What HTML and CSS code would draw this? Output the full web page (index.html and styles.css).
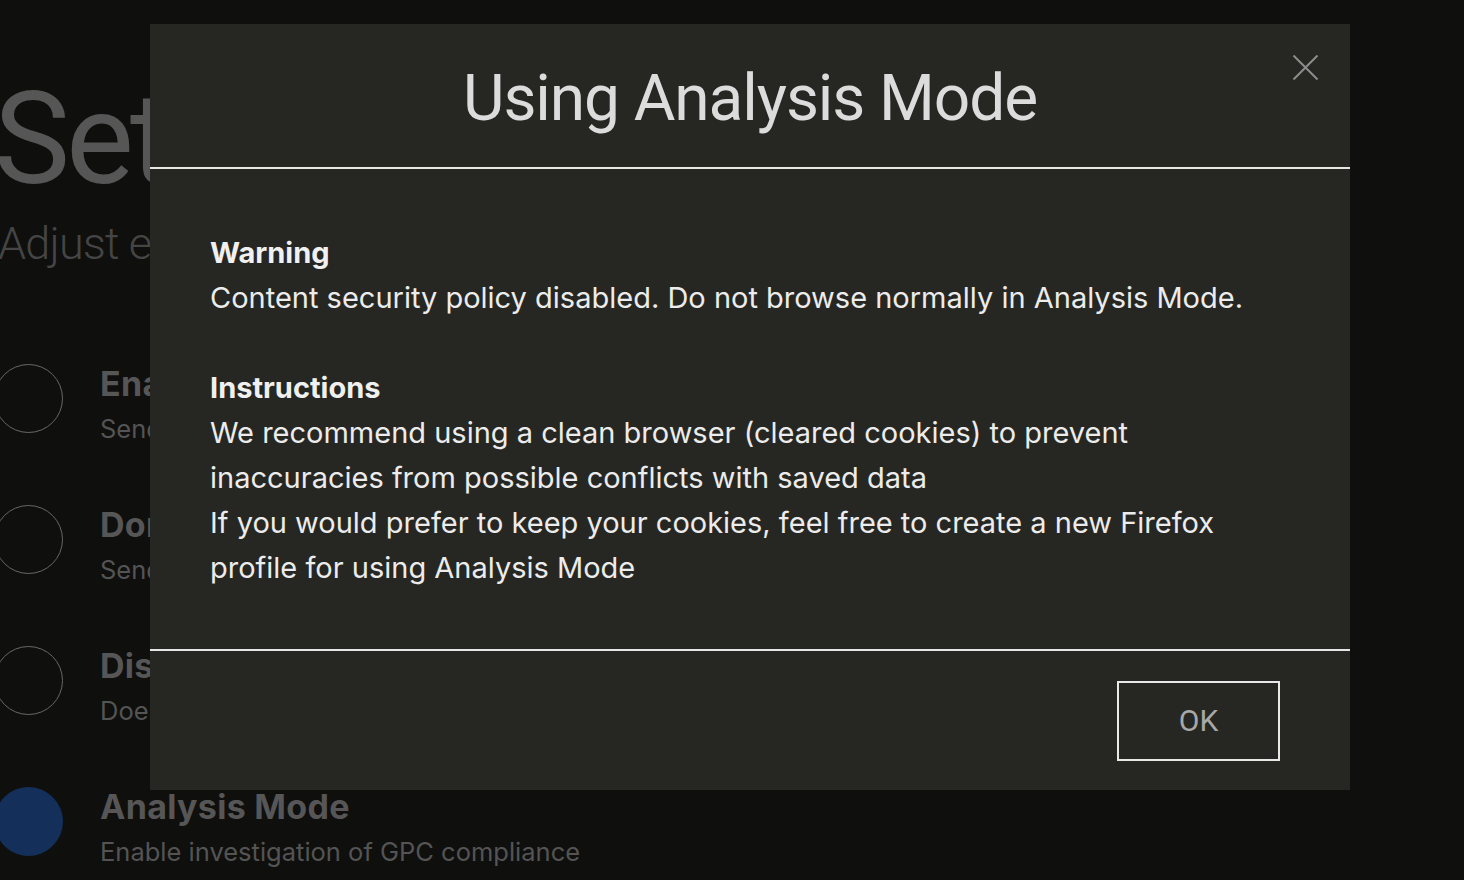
FILE: index.html
```html
<!DOCTYPE html>
<html lang="en">
<head>
<meta charset="utf-8">
<title>Settings - Using Analysis Mode</title>
<link rel="stylesheet" href="styles.css">
</head>
<body>
<div class="page">
  <h1 class="page-title">Settings</h1>
  <p class="page-subtitle">Adjust extension settings</p>
  <div class="options">
    <div class="option">
      <span class="radio"></span>
      <div class="option-text">
        <div class="option-title">Enable</div>
        <div class="option-desc">Send Do Not Sell signals to all websites</div>
      </div>
    </div>
    <div class="option">
      <span class="radio"></span>
      <div class="option-text">
        <div class="option-title">Domainlist</div>
        <div class="option-desc">Send signals to selected websites</div>
      </div>
    </div>
    <div class="option">
      <span class="radio"></span>
      <div class="option-text">
        <div class="option-title">Disable</div>
        <div class="option-desc">Does not send signals</div>
      </div>
    </div>
    <div class="option">
      <span class="radio radio-on"></span>
      <div class="option-text">
        <div class="option-title">Analysis Mode</div>
        <div class="option-desc">Enable investigation of GPC compliance</div>
      </div>
    </div>
  </div>
</div>

<div class="modal">
  <div class="modal-header">
    <h2 class="modal-title">Using Analysis Mode</h2>
    <button class="modal-close" aria-label="Close">
      <svg width="25" height="25" viewBox="0 0 25 25"><path d="M0.5 0.5 L24.5 24.5 M24.5 0.5 L0.5 24.5" stroke="#8c8c8c" stroke-width="2" fill="none"/></svg>
    </button>
  </div>
  <div class="modal-body">
    <div class="section">
      <div class="section-head">Warning</div>
      <p class="section-text">Content security policy disabled. Do not browse normally in Analysis Mode.</p>
    </div>
    <div class="section">
      <div class="section-head">Instructions</div>
      <p class="section-text">We recommend using a clean browser (cleared cookies) to prevent inaccuracies from possible conflicts with saved data</p>
      <p class="section-text">If you would prefer to keep your cookies, feel free to create a new Firefox profile for using Analysis Mode</p>
    </div>
  </div>
  <div class="modal-footer">
    <button class="ok-btn">OK</button>
  </div>
</div>
</body>
</html>
```

FILE: styles.css
```css
html, body {
  margin: 0;
  padding: 0;
}
body {
  background: #0f0f0e;
  width: 1464px;
  height: 880px;
  overflow: hidden;
  position: relative;
  font-family: Inter, "Noto Sans", sans-serif;
}
.page {
  margin-left: -6px;
  padding-top: 64px;
}
.page-title {
  margin: 0;
  font-family: Roboto, sans-serif;
  font-weight: 400;
  font-size: 128px;
  line-height: 150px;
  letter-spacing: -4px;
  color: #565656;
  white-space: nowrap;
}
.page-subtitle {
  margin: 3px 0 0 4px;
  font-family: Roboto, sans-serif;
  font-weight: 300;
  font-size: 45px;
  line-height: 53px;
  letter-spacing: -0.8px;
  color: #454545;
  white-space: nowrap;
}
.options {
  margin-top: 94px;
  display: flex;
  flex-direction: column;
  gap: 58px;
}
.option {
  display: flex;
  align-items: flex-start;
  gap: 37px;
}
.radio {
  flex: none;
  width: 67px;
  height: 67px;
  border-radius: 50%;
  border: 1.5px solid #676767;
}
.radio-on {
  background: #14305a;
  border-color: #14305a;
}
.option-text {
  height: 83px;
  white-space: nowrap;
}
.option-title {
  font-weight: 700;
  font-size: 34px;
  line-height: 40px;
  letter-spacing: 0.3px;
  color: #565656;
  margin-top: 0;
}
.option-desc {
  margin-top: 7px;
  font-size: 25.5px;
  line-height: 36px;
  color: #545454;
}

.modal {
  position: absolute;
  left: 150px;
  top: 24px;
  width: 1200px;
  height: 766px;
  background: #262723;
  display: flex;
  flex-direction: column;
}
.modal-header {
  position: relative;
  box-sizing: border-box;
  height: 145px;
  padding-top: 37px;
  border-bottom: 2px solid #e6e6e6;
  text-align: center;
}
.modal-title {
  margin: 0;
  font-family: Roboto, sans-serif;
  font-weight: 400;
  font-size: 64px;
  line-height: 75px;
  letter-spacing: -1.1px;
  color: #dcdcdc;
}
.modal-close {
  position: absolute;
  top: 31px;
  right: 32px;
  width: 25px;
  height: 25px;
  padding: 0;
  border: 0;
  background: none;
  display: block;
}
.modal-close svg {
  display: block;
}
.modal-body {
  box-sizing: border-box;
  height: 480px;
  padding: 61px 60px 59px;
  display: flex;
  flex-direction: column;
  gap: 45px;
  color: #ececec;
  font-size: 29px;
  line-height: 45px;
}
.section-head {
  font-weight: 700;
  color: #f0f0f0;
}
.section-text {
  margin: 0;
}
.modal-footer {
  flex: 1;
  border-top: 2px solid #e6e6e6;
  display: flex;
  justify-content: flex-end;
  align-items: center;
  padding-right: 70px;
}
.ok-btn {
  box-sizing: border-box;
  width: 163px;
  height: 80px;
  border: 2px solid #e8e8e8;
  background: transparent;
  color: #a8a8a8;
  font-family: Roboto, sans-serif;
  font-size: 30px;
  padding: 0;
}
```
